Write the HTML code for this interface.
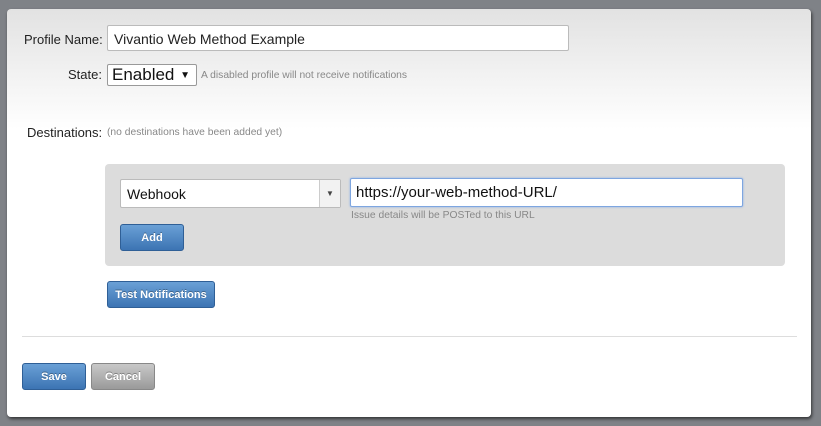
<!DOCTYPE html>
<html><head><style>
body{margin:0;width:821px;height:426px;background:#7f8287;font-family:"Liberation Sans",sans-serif;position:relative;overflow:hidden}
.panel{position:absolute;left:7px;top:9px;width:804px;height:408px;background:linear-gradient(#e2e2e2 0,#fff 120px,#fff);border-radius:4px;box-shadow:1px 2px 3px rgba(0,0,0,.6)}
.a{position:absolute}
.lbl{font-size:13px;color:#222}
.small{font-size:10.3px;color:#888}
.inp{background:#fff;border:1px solid #bbb;border-radius:2px;box-sizing:border-box}
.btn{position:absolute;border-radius:3px;color:#fff;font-weight:bold;font-size:11px;text-align:center;box-sizing:border-box;background:linear-gradient(#6aa0d6,#3c74b3);border:1px solid #2f5f96;text-shadow:0 -1px 0 rgba(0,0,0,.3)}
</style></head><body>
<div class="panel"></div>
<div class="a lbl" style="left:24px;top:32px">Profile Name:</div>
<div class="a inp" style="left:107px;top:25px;width:462px;height:26px;font-size:14px;padding:5px 0 0 6px;color:#222">Vivantio Web Method Example</div>
<div class="a lbl" style="left:68px;top:67px">State:</div>
<div class="a inp" style="left:107px;top:64px;width:90px;height:22px;border-color:#999;font-size:17px;padding:0 0 0 4px;color:#111;line-height:20px">Enabled <span style="font-size:10px;position:absolute;right:6px;top:1px">▼</span></div>
<div class="a small" style="left:201px;top:70px">A disabled profile will not receive notifications</div>
<div class="a lbl" style="left:27px;top:125px">Destinations:</div>
<div class="a small" style="left:107px;top:127px">(no destinations have been added yet)</div>
<div class="a" style="left:105px;top:164px;width:680px;height:102px;background:#dcdcdc;border-radius:4px"></div>
<div class="a inp" style="left:120px;top:179px;width:221px;height:29px;font-size:14px;padding:6px 0 0 6px;color:#111">Webhook<div class="a" style="right:0;top:0;width:20px;height:27px;border-left:1px solid #ccc;background:#f2f2f2;font-size:8px;color:#444;text-align:center;line-height:27px">▼</div></div>
<div class="a inp" style="left:350px;top:178px;width:393px;height:29px;border:1px solid #7ea6e0;box-shadow:0 0 2px #8ab0e8;font-size:15px;padding:5px 0 0 5px;color:#111">https://your-web-method-URL/</div>
<div class="a small" style="left:351px;top:210px">Issue details will be POSTed to this URL</div>
<div class="btn" style="left:120px;top:224px;width:64px;height:27px;line-height:27px">Add</div>
<div class="btn" style="left:107px;top:281px;width:108px;height:27px;line-height:27px">Test Notifications</div>
<div class="a" style="left:22px;top:336px;width:775px;height:1px;background:#ddd"></div>
<div class="btn" style="left:22px;top:363px;width:64px;height:27px;line-height:27px">Save</div>
<div class="btn" style="left:91px;top:363px;width:64px;height:27px;line-height:27px;background:linear-gradient(#c8c8c8,#9a9a9a);border-color:#888">Cancel</div>
</body></html>
